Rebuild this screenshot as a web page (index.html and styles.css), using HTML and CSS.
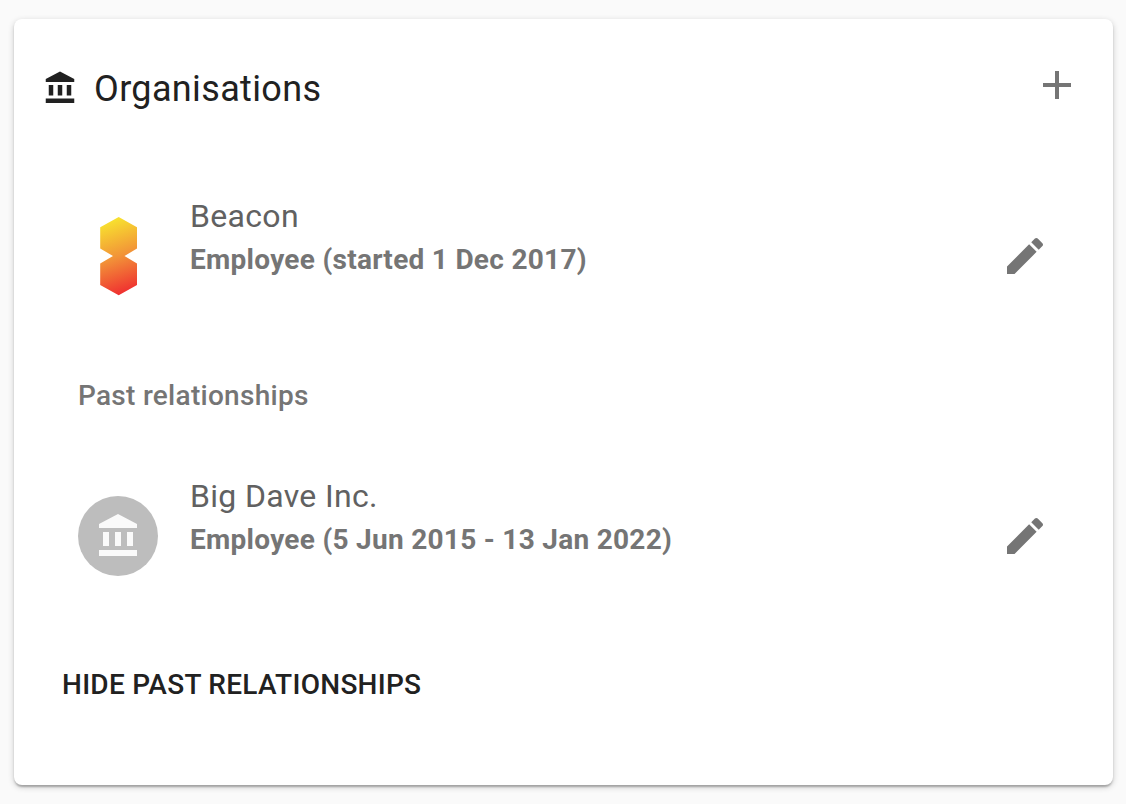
FILE: index.html
```html
<!DOCTYPE html>
<html lang="en">
<head>
<meta charset="utf-8">
<meta name="viewport" content="width=device-width, initial-scale=1">
<title>Organisations</title>
<link rel="stylesheet" href="styles.css">
</head>
<body>
<svg class="sprite" aria-hidden="true">
  <symbol id="bank" viewBox="-0.5 0 24 24"><path d="M11.5 1 2 6v2h19V6M16 10v7h3v-7M2 22h19v-3H2M10 10v7h3v-7M4 10v7h3v-7z"/></symbol>
  <symbol id="pencil" viewBox="0 0 24 24"><path d="M20.71 7.04c.39-.39.39-1.04 0-1.41l-2.34-2.34c-.37-.39-1.02-.39-1.41 0l-1.84 1.83 3.75 3.75M3 17.25V21h3.75L17.81 9.93l-3.75-3.75z"/></symbol>
</svg>
<main class="card">
  <header class="card-header">
    <svg class="title-icon" aria-hidden="true"><use href="#bank"/></svg>
    <h1 class="title">Organisations</h1>
    <button class="icon-button add" type="button" aria-label="Add organisation">
      <svg class="icon" viewBox="0 0 24 24"><path d="M19 13h-6v6h-2v-6H5v-2h6V5h2v6h6z"/></svg>
    </button>
  </header>

  <section class="item">
    <svg class="avatar" viewBox="0 0 80 80" role="img" aria-label="Beacon logo">
      <defs>
        <linearGradient id="flame" gradientUnits="userSpaceOnUse" x1="28" y1="4" x2="54" y2="76">
          <stop offset="0" stop-color="#f8e52e"/>
          <stop offset=".5" stop-color="#f29338"/>
          <stop offset="1" stop-color="#ef2b30"/>
        </linearGradient>
      </defs>
      <path fill="url(#flame)" d="M40.700 1 59 11.200V32.500L46.500 40 59 47.500V69L40.700 79.300 22.200 69V47.500L35 40 22.200 32.500V11.200z"/>
    </svg>
    <div class="details">
      <h2 class="name">Beacon</h2>
      <p class="role">Employee (started 1 Dec 2017)</p>
    </div>
    <button class="icon-button edit" type="button" aria-label="Edit Beacon">
      <svg class="icon"><use href="#pencil"/></svg>
    </button>
  </section>

  <h2 class="subheader">Past relationships</h2>

  <section class="item">
    <div class="avatar placeholder"><svg class="icon" aria-hidden="true"><use href="#bank"/></svg></div>
    <div class="details">
      <h2 class="name">Big Dave Inc.</h2>
      <p class="role">Employee (5 Jun 2015 - 13 Jan 2022)</p>
    </div>
    <button class="icon-button edit" type="button" aria-label="Edit Big Dave Inc.">
      <svg class="icon"><use href="#pencil"/></svg>
    </button>
  </section>

  <button class="toggle" type="button">Hide past relationships</button>
</main>
</body>
</html>
```
FILE: styles.css
```css
* {
  box-sizing: border-box;
}

body {
  margin: 0;
  padding: 19px 13px 19px 14px;
  background: #fafafa;
  color: #212121;
  font-family: Roboto, sans-serif;
}

h1,
h2,
p,
button {
  margin: 0;
  letter-spacing: 0.01em;
}

svg {
  display: block;
  fill: currentColor;
}

.sprite {
  position: absolute;
  width: 0;
  height: 0;
}

.card {
  padding: 42px 32px 64px;
  background: #fff;
  border-radius: 8px;
  box-shadow: 0 2px 6px rgba(0, 0, 0, 0.2), 0 2px 2px rgba(0, 0, 0, 0.14), 0 4px 2px -2px rgba(0, 0, 0, 0.12);
}

.card-header {
  display: flex;
  align-items: center;
  min-height: 54px;
  margin: 0 0 79px -4px;
}

.title-icon {
  width: 36px;
  height: 36px;
  margin-right: 16px;
}

.title {
  flex: 1;
  padding-top: 2px;
  font-size: 36px;
  font-weight: 400;
  line-height: 44px;
}

.icon-button {
  flex: none;
  padding: 0;
  border: 0;
  background: none;
  color: #757575;
  cursor: pointer;
}

.icon {
  width: 48px;
  height: 48px;
}

.add {
  align-self: flex-start;
}

.item {
  display: flex;
  align-items: flex-end;
  gap: 32px;
  padding: 0 32px;
}

.avatar {
  flex: none;
  width: 80px;
  height: 80px;
}

.placeholder {
  display: flex;
  align-items: center;
  justify-content: center;
  border-radius: 50%;
  background: #bdbdbd;
  color: #fafafa;
}

.details {
  flex: 1;
  min-height: 102px;
}

.name {
  color: #616161;
  font-size: 32px;
  font-weight: 400;
  line-height: 44px;
}

.role {
  color: #757575;
  font-size: 28px;
  font-weight: 700;
  line-height: 44px;
}

.edit {
  margin-bottom: 16px;
}

.subheader {
  margin: 78px 32px 56px;
  color: #757575;
  font-size: 28px;
  font-weight: 500;
  line-height: 44px;
}

.toggle {
  display: block;
  margin-top: 73px;
  padding: 14px 16px;
  border: 0;
  background: none;
  color: #212121;
  font: 500 28px/44px Roboto, sans-serif;
  text-transform: uppercase;
  cursor: pointer;
}
```
